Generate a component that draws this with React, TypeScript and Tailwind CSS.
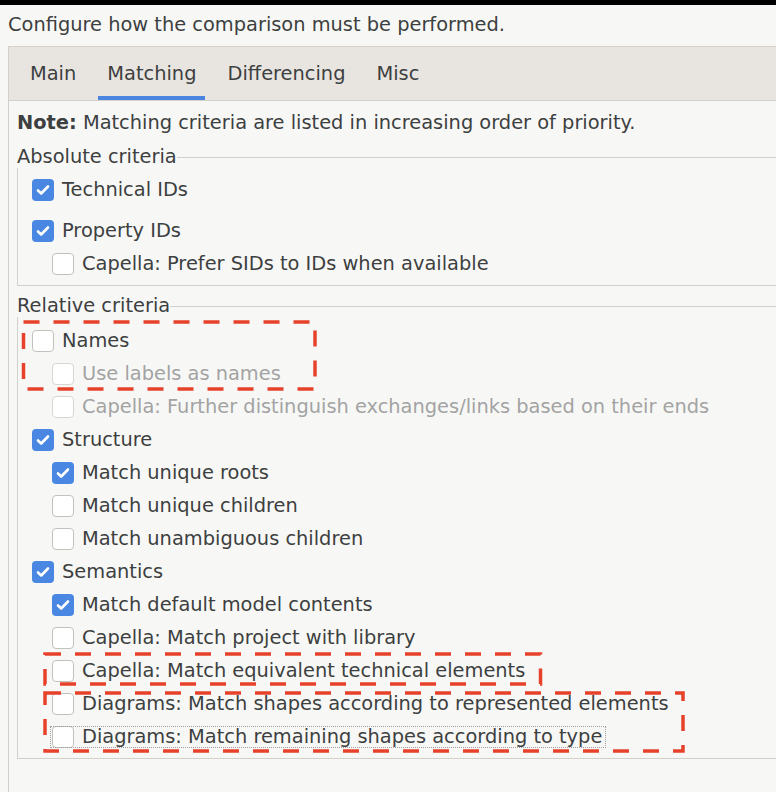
import React from 'react';

type Row = {
  label: string;
  checked?: boolean;
  nested?: boolean;
  disabled?: boolean;
  focused?: boolean;
};

const ABSOLUTE: Row[] = [
  { label: 'Technical IDs', checked: true },
  { label: 'Property IDs', checked: true },
  { label: 'Capella: Prefer SIDs to IDs when available', nested: true },
];

const RELATIVE: Row[] = [
  { label: 'Names' },
  { label: 'Use labels as names', nested: true, disabled: true },
  { label: 'Capella: Further distinguish exchanges/links based on their ends', nested: true, disabled: true },
  { label: 'Structure', checked: true },
  { label: 'Match unique roots', checked: true, nested: true },
  { label: 'Match unique children', nested: true },
  { label: 'Match unambiguous children', nested: true },
  { label: 'Semantics', checked: true },
  { label: 'Match default model contents', checked: true, nested: true },
  { label: 'Capella: Match project with library', nested: true },
  { label: 'Capella: Match equivalent technical elements', nested: true },
  { label: 'Diagrams: Match shapes according to represented elements', nested: true },
  { label: 'Diagrams: Match remaining shapes according to type', nested: true, focused: true },
];

const TABS = ['Main', 'Matching', 'Differencing', 'Misc'];

function Checkbox({ checked, disabled }: { checked?: boolean; disabled?: boolean }) {
  if (checked) {
    return (
      <span className="flex h-[22px] w-[22px] shrink-0 items-center justify-center rounded-[4px] bg-[#4a87e2]">
        <svg width="16" height="16" viewBox="0 0 16 16" fill="none">
          <path d="M3 8.5l3.2 3L13 4.5" stroke="white" strokeWidth="2.6" strokeLinecap="round" strokeLinejoin="round" />
        </svg>
      </span>
    );
  }
  return (
    <span
      className={`h-[22px] w-[22px] shrink-0 rounded-[4px] border bg-white ${
        disabled ? 'border-[#d8d6d2]' : 'border-[#c4c1bc]'
      }`}
    />
  );
}

function CheckRow({ row }: { row: Row }) {
  return (
    <div className={`flex h-[33px] items-center ${row.nested ? 'pl-[34px]' : 'pl-[14px]'}`}>
      <div className="relative flex items-center gap-2">
        {row.focused && (
          <span className="absolute -left-[2px] -right-[4px] bottom-[1px] top-[2px] border border-dotted border-[#a0a0a0]" />
        )}
        <Checkbox checked={row.checked} disabled={row.disabled} />
        <span className={`pt-[1px] ${row.disabled ? 'text-[#a3a3a3]' : 'text-[#3d3f40]'}`}>{row.label}</span>
      </div>
    </div>
  );
}

function Group({ title, children, className }: { title: string; children: React.ReactNode; className?: string }) {
  return (
    <div className={className}>
      <div className="flex h-[24px] items-center">
        <span className="pt-[1px] text-[#3d3f40]">{title}</span>
        <div className="mt-[3px] h-px flex-1 bg-[#d3d0cb]" />
      </div>
      <div className="border-x border-b border-[#d3d0cb]">{children}</div>
    </div>
  );
}

export default function App() {
  return (
    <div
      className="relative h-[792px] w-[776px] overflow-hidden bg-[#f7f8f6] text-[19.4px] leading-[24px] text-[#3d3f40]"
      style={{ fontFamily: '"DejaVu Sans", Verdana, sans-serif' }}
    >
      <div className="h-[5px] bg-black" />
      <div className="flex h-[41px] items-center pb-[1px] pl-2">Configure how the comparison must be performed.</div>

      <div className="ml-2 w-[800px] border border-[#d3d0cb]">
        {/* Tab bar */}
        <div className="flex h-[54px] gap-[13px] border-b border-[#d3d0cb] bg-[#e8e5e1] pl-3">
          {TABS.map((t) => (
            <div key={t} className="relative flex items-center px-[9px] pt-[1px]">
              {t}
              {t === 'Matching' && <div className="absolute inset-x-0 bottom-0 h-[4px] bg-[#4a86df]" />}
            </div>
          ))}
        </div>

        <div className="h-[700px] pl-2">
          <div className="flex h-[42px] items-center pt-[2px]">
            <span>
              <b className="font-bold">Note:</b> Matching criteria are listed in increasing order of priority.
            </span>
          </div>

          <Group title="Absolute criteria" className="mt-[1px]">
            <div className="pb-[5px] pt-[5px]">
              <div className="mb-2">
                <CheckRow row={ABSOLUTE[0]} />
              </div>
              <CheckRow row={ABSOLUTE[1]} />
              <CheckRow row={ABSOLUTE[2]} />
            </div>
          </Group>

          <Group title="Relative criteria" className="mt-[7px]">
            <div className="pb-[5px] pt-[7px]">
              {RELATIVE.map((r) => (
                <CheckRow key={r.label} row={r} />
              ))}
            </div>
          </Group>
        </div>
      </div>

      {/* Annotation overlay */}
      <svg className="pointer-events-none absolute inset-0" width="776" height="792">
        <g fill="none" stroke="#e8412b" strokeWidth="3.5" strokeDasharray="16 14">
          <rect x="23.5" y="322" width="291.5" height="67" />
          <rect x="45" y="654" width="495.5" height="30" />
          <rect x="45" y="693" width="638" height="58" />
        </g>
      </svg>
    </div>
  );
}
